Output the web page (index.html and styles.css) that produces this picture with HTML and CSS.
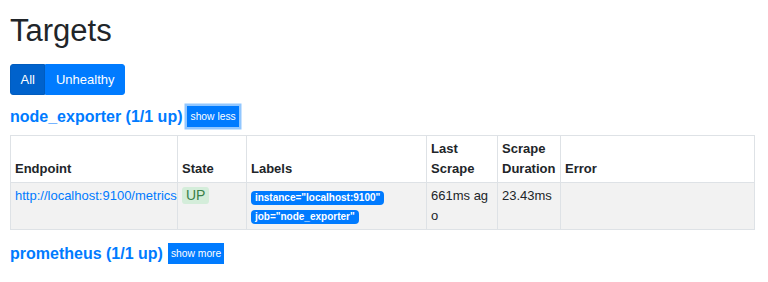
FILE: index.html
```html
<!DOCTYPE html>
<html lang="en">
<head>
    <meta charset="UTF-8">
    <title>Targets</title>
    <link rel="stylesheet" href="styles.css">
</head>
<body>
<div class="page">
    <h1>Targets</h1>

    <div class="filter">
        <button class="btn active">All</button>
        <button class="btn">Unhealthy</button>
    </div>

    <div class="job-head">
        <a href="#node_exporter" class="job-title">node_exporter (1/1 up)</a>
        <button class="btn-xs focused">show less</button>
    </div>

    <table class="targets">
        <thead>
            <tr>
                <th class="col-endpoint">Endpoint</th>
                <th class="col-state">State</th>
                <th class="col-labels">Labels</th>
                <th class="col-last">Last Scrape</th>
                <th class="col-duration">Scrape Duration</th>
                <th>Error</th>
            </tr>
        </thead>
        <tbody>
            <tr>
                <td><a href="#metrics">http://localhost:9100/metrics</a></td>
                <td><span class="state-up">UP</span></td>
                <td>
                    <div class="label-row"><span class="label">instance="localhost:9100"</span></div>
                    <div class="label-row"><span class="label">job="node_exporter"</span></div>
                </td>
                <td class="break">661ms ago</td>
                <td>23.43ms</td>
                <td></td>
            </tr>
        </tbody>
    </table>

    <div class="job-head second">
        <a href="#prometheus" class="job-title">prometheus (1/1 up)</a>
        <button class="btn-xs">show more</button>
    </div>
</div>
</body>
</html>
```

FILE: styles.css
```css
body { margin: 0; font-family: "Liberation Sans", Arial, sans-serif; font-size: 13px; line-height: 1.5; color: #212529; }
a { color: #007bff; text-decoration: none; }

.page { padding: 0 13px 0 10px; }

h1 { font-size: 31px; font-weight: normal; line-height: 1.2; margin: 12px 0 15px; }

.filter { display: flex; }
.btn { font-family: inherit; font-size: 13px; line-height: 19.5px; padding: 4.5px 9.5px; border: 1px solid #007bff; background: #007bff; color: #fff; margin: 0; }
.btn.active { background: #0062cc; border-color: #005cbf; }
.filter .btn:first-child { border-radius: 3px 0 0 3px; }
.filter .btn:last-child { border-radius: 0 3px 3px 0; }

.job-head { display: flex; align-items: center; gap: 5px; height: 22px; margin-top: 11px; }
.job-head.second { margin-top: 13px; }
.job-title { font-size: 16px; font-weight: bold; line-height: 1.2; }
.btn-xs { font-family: inherit; font-size: 10.3px; line-height: 15px; padding: 2px 2px; border: 1px solid #007bff; background: #007bff; color: #fff; border-radius: 0; }
.btn-xs.focused { box-shadow: 0 0 0 2.5px rgba(38, 143, 255, 0.5); }

.targets { width: 100%; border-collapse: collapse; table-layout: fixed; margin-top: 7px; }
.targets th, .targets td { border: 1px solid #dee2e6; padding: 3.5px 4px; text-align: left; }
.targets th { vertical-align: bottom; font-weight: bold; }
.targets td { vertical-align: top; }
.targets tbody tr { background: #f2f2f2; }

.col-endpoint { width: 158px; }
.col-state { width: 60px; }
.col-labels { width: 171px; }
.col-last { width: 62px; }
.col-duration { width: 54px; }
.break { word-break: break-all; }

.state-up { display: inline-block; background: #d4edda; color: #3a8048; font-size: 14px; line-height: 17px; padding: 0 4px; border-radius: 3px; margin-top: 1px; }

.label-row { line-height: 19px; }
.label-row:first-child { margin-top: 1px; }
.label { display: inline-block; background: #007bff; color: #fff; font-size: 10px; font-weight: bold; line-height: 1; padding: 2px 3.9px; border-radius: 4px; vertical-align: middle; }
```
